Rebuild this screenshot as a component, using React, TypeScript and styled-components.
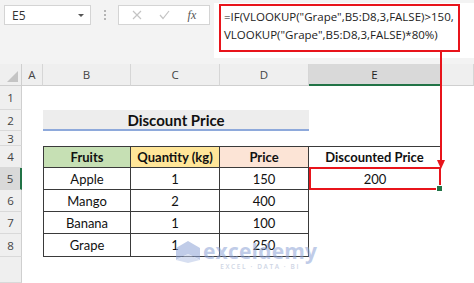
import React from "react";
import styled, { createGlobalStyle, css } from "styled-components";

const Global = createGlobalStyle`
  html, body { margin: 0; padding: 0; background: #ffffff; }
  body { width: 474px; height: 283px; overflow: hidden; }
  * { box-sizing: border-box; }
`;

const Page = styled.div`
  position: relative;
  width: 474px;
  height: 283px;
  overflow: hidden;
  background: #fff;
  font-family: "Open Sans", "Noto Sans", sans-serif;
`;

const Toolbar = styled.div`
  height: 64px;
  background: #f3f3f3;
  display: flex;
  align-items: flex-start;
  padding-top: 5px;
  padding-left: 4px;
`;

const NameBox = styled.div`
  width: 87px;
  height: 20px;
  background: #fff;
  border: 1px solid #d4d4d4;
  display: flex;
  align-items: center;
  justify-content: space-between;
  padding: 0 6px 0 7px;
  font-size: 12px;
  color: #333;
`;

const Caret = styled.span`
  width: 0;
  height: 0;
  border-left: 3px solid transparent;
  border-right: 3px solid transparent;
  border-top: 3px solid #555;
`;

const Dots = styled.div`
  width: 27px;
  height: 20px;
  display: flex;
  flex-direction: column;
  align-items: center;
  justify-content: center;
  gap: 2px;
  & > i {
    width: 2px;
    height: 2px;
    background: #b5b5b5;
  }
`;

const FxBox = styled.div`
  width: 92px;
  height: 20px;
  background: #fff;
  border: 1px solid #d4d4d4;
  display: flex;
  align-items: center;
  justify-content: space-around;
  padding: 0 4px;
`;

const FxLabel = styled.span`
  font-family: "Liberation Serif", serif;
  font-style: italic;
  font-size: 12px;
  color: #555;
`;

const FormulaArea = styled.div`
  margin-left: 4px;
  margin-top: -2px;
  flex: 1;
  height: 55px;
  background: #fff;
  padding: 1px 0 0 5px;
`;

const FormulaBox = styled.div`
  width: 241px;
  height: 48px;
  border: 2px solid #e8141b;
  padding: 2px 0 0 3px;
  font-size: 11.5px;
  line-height: 18px;
  color: #222;
  white-space: nowrap;
`;

const Sheet = styled.div`
  display: grid;
  grid-template-columns: 22px 21px 88px 89px 89px 132px 1fr;
  grid-template-rows: 22px 24px 21px 15px 22px 22px 22px 22px 23px 1fr;
  height: 219px;
  font-family: "Lato", "Liberation Sans", sans-serif;
  color: #111;
`;

const ColHead = styled.div<{ $sel?: boolean }>`
  background: ${(p) => (p.$sel ? "#d9d9d9" : "#efefef")};
  border-right: 1px solid #d6d6d6;
  border-bottom: ${(p) => (p.$sel ? "2px solid #217346" : "1px solid #cfcfcf")};
  display: flex;
  align-items: center;
  justify-content: center;
  font-family: "Open Sans", sans-serif;
  font-size: 11.5px;
  color: ${(p) => (p.$sel ? "#222" : "#444")};
`;

const Corner = styled.div`
  background: #efefef;
  border-right: 1px solid #cfcfcf;
  border-bottom: 1px solid #cfcfcf;
  position: relative;
  &::after {
    content: "";
    position: absolute;
    right: 3px;
    bottom: 3px;
    width: 0;
    height: 0;
    border-left: 11px solid transparent;
    border-bottom: 11px solid #c4c4c4;
  }
`;

const RowHead = styled.div<{ $row: number; $sel?: boolean }>`
  grid-column: 1;
  grid-row: ${(p) => p.$row};
  background: ${(p) => (p.$sel ? "#d9d9d9" : "#efefef")};
  border-right: ${(p) => (p.$sel ? "2px solid #217346" : "1px solid #cfcfcf")};
  border-bottom: 1px solid #d9d9d9;
  display: flex;
  align-items: center;
  justify-content: center;
  font-family: "Open Sans", sans-serif;
  font-size: 11.5px;
  color: #444;
`;

const Band = styled.div`
  grid-column: 3 / 6;
  grid-row: 3;
  background: #ededed;
  border-bottom: 2px solid #8ea9db;
  display: flex;
  align-items: center;
  justify-content: center;
  font-weight: 700;
  font-size: 15px;
  color: #111;
`;

const Cell = styled.div<{
  $col: number;
  $row: number;
  $bg?: string;
  $head?: boolean;
  $first?: boolean;
}>`
  grid-column: ${(p) => p.$col};
  grid-row: ${(p) => p.$row};
  background: ${(p) => p.$bg || "#fff"};
  border-right: 1px solid #3a3a3a;
  border-bottom: 1px solid #3a3a3a;
  ${(p) =>
    p.$first &&
    css`
      border-left: 1px solid #3a3a3a;
    `}
  ${(p) =>
    p.$head &&
    css`
      border-top: 1px solid #3a3a3a;
      font-weight: 700;
    `}
  display: flex;
  align-items: center;
  justify-content: center;
  font-size: 13px;
`;

const Active = styled.div`
  grid-column: 6;
  grid-row: 6;
  position: relative;
  border: 2px solid #e8141b;
  margin-top: -1px;
  display: flex;
  align-items: center;
  justify-content: center;
  font-size: 13px;
  &::after {
    content: "";
    position: absolute;
    right: -4px;
    bottom: -4px;
    width: 5px;
    height: 5px;
    background: #217346;
    border: 1px solid #fff;
  }
`;

const Arrow = styled.svg`
  position: absolute;
  left: 436px;
  top: 52px;
  width: 12px;
  height: 118px;
  overflow: visible;
`;

const Watermark = styled.div`
  position: absolute;
  left: 175px;
  top: 240px;
  display: flex;
  align-items: flex-start;
  gap: 2px;
  opacity: 0.55;
  pointer-events: none;
`;

const WmText = styled.div`
  display: flex;
  flex-direction: column;
  align-items: center;
`;

const WmBig = styled.span`
  font-family: "Open Sans", sans-serif;
  font-weight: 700;
  font-size: 21px;
  line-height: 22px;
  color: #8da3d6;
  letter-spacing: 0.2px;
`;

const WmSmall = styled.span`
  font-family: "Open Sans", sans-serif;
  font-weight: 600;
  font-size: 6.5px;
  letter-spacing: 1.6px;
  color: #a8b4cf;
`;

const fruits = [
  ["Apple", "1", "150"],
  ["Mango", "2", "400"],
  ["Banana", "1", "100"],
  ["Grape", "1", "250"],
];

const cols = ["", "A", "B", "C", "D", "E", ""];

export default function App() {
  return (
    <Page>
      <Global />
      <Toolbar>
        <NameBox>
          E5
          <Caret />
        </NameBox>
        <Dots>
          <i />
          <i />
          <i />
        </Dots>
        <FxBox>
          <svg width="10" height="10" viewBox="0 0 10 10">
            <path d="M1 1 L9 9 M9 1 L1 9" stroke="#c4c4c4" strokeWidth="1.2" />
          </svg>
          <svg width="11" height="10" viewBox="0 0 11 10">
            <path d="M1 5 L4 8.5 L10 1" stroke="#c4c4c4" strokeWidth="1.2" fill="none" />
          </svg>
          <FxLabel>fx</FxLabel>
        </FxBox>
        <FormulaArea>
          <FormulaBox>
            =IF(VLOOKUP("Grape",B5:D8,3,FALSE)&gt;150,
            <br />
            VLOOKUP("Grape",B5:D8,3,FALSE)*80%)
          </FormulaBox>
        </FormulaArea>
      </Toolbar>
      <Sheet>
        <Corner />
        {cols.slice(1).map((c, i) => (
          <ColHead key={i} $sel={c === "E"}>
            {c}
          </ColHead>
        ))}
        {[1, 2, 3, 4, 5, 6, 7, 8].map((n) => (
          <RowHead key={n} $row={n + 1} $sel={n === 5}>
            {n}
          </RowHead>
        ))}
        <RowHead $row={10} />
        <Band>Discount Price</Band>
        <Cell $col={3} $row={5} $head $first $bg="#c6e0b4">
          Fruits
        </Cell>
        <Cell $col={4} $row={5} $head $bg="#ffe699">
          Quantity (kg)
        </Cell>
        <Cell $col={5} $row={5} $head $bg="#fce4d6">
          Price
        </Cell>
        <Cell $col={6} $row={5} $head>
          Discounted Price
        </Cell>
        {fruits.map((r, i) => (
          <React.Fragment key={r[0]}>
            <Cell $col={3} $row={6 + i} $first>
              {r[0]}
            </Cell>
            <Cell $col={4} $row={6 + i}>
              {r[1]}
            </Cell>
            <Cell $col={5} $row={6 + i}>
              {r[2]}
            </Cell>
          </React.Fragment>
        ))}
        <Active>200</Active>
      </Sheet>
      <Arrow viewBox="0 0 12 118">
        <line x1="5" y1="0" x2="5" y2="110" stroke="#e8141b" strokeWidth="2" />
        <path d="M1 108 L9 108 L5 117 Z" fill="#e8141b" />
      </Arrow>
      <Watermark>
        <svg width="26" height="24" viewBox="0 0 26 24">
          <path d="M13 1 L25 8 L25 20 L13 14 L1 20 L1 8 Z" fill="#8da3d6" />
          <path d="M1 20 L13 14 L25 20 L13 23 Z" fill="#b8c6e6" />
        </svg>
        <WmText>
          <WmBig>exceldemy</WmBig>
          <WmSmall>EXCEL · DATA · BI</WmSmall>
        </WmText>
      </Watermark>
    </Page>
  );
}
